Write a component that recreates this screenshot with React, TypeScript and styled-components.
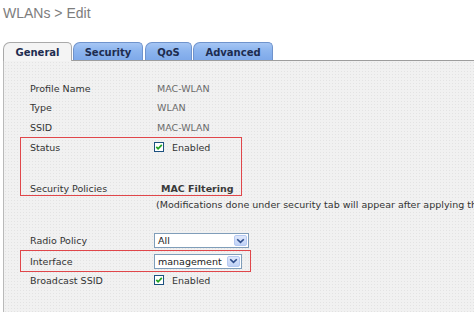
import React from 'react';
import styled, { createGlobalStyle } from 'styled-components';

const GlobalStyle = createGlobalStyle`
  html, body {
    margin: 0;
    padding: 0;
    background: #ffffff;
    overflow: hidden;
  }
  body {
    font-family: "DejaVu Sans", Verdana, sans-serif;
  }
`;

const tabs = [
  { name: 'General', width: 69, gap: 1 },
  { name: 'Security', width: 70, gap: 2 },
  { name: 'QoS', width: 47, gap: 1 },
  { name: 'Advanced', width: 80, gap: 0 },
];

const CheckBox = () => (
  <SCheck width="10" height="10" viewBox="0 0 10 10">
    <rect x="0.5" y="0.5" width="9" height="9" fill="#ffffff" stroke="#1c5180" />
    <path d="M2.3 4.9 L4.1 6.8 L7.8 2.9" fill="none" stroke="#21a121" strokeWidth="1.7" />
  </SCheck>
);

const Select = ({ value, width }: { value: string; width: number }) => (
  <SSelect $width={width}>
    <SSelectText>{value}</SSelectText>
    <SSelectButton>
      <svg width="9" height="6" viewBox="0 0 9 6">
        <path d="M1.2 1.2 L4.5 4.4 L7.8 1.2" fill="none" stroke="#2f4d8c" strokeWidth="1.6" />
      </svg>
    </SSelectButton>
  </SSelect>
);

const App = () => {
  return (
    <SPage>
      <GlobalStyle />
      <STitle>WLANs &gt; Edit</STitle>

      <STabBar>
        {tabs.map((t, i) => (
          <STab key={t.name} $active={i === 0} $width={t.width} $gap={t.gap}>
            {t.name}
          </STab>
        ))}
      </STabBar>

      <SPanel>
        <SRow $h={19.5}>
          <SLabel>Profile Name</SLabel>
          <SValue>MAC-WLAN</SValue>
        </SRow>
        <SRow $h={19.5}>
          <SLabel>Type</SLabel>
          <SValue>WLAN</SValue>
        </SRow>
        <SRow $h={19.5}>
          <SLabel>SSID</SLabel>
          <SValue>MAC-WLAN</SValue>
        </SRow>

        <SHighlight $width={222}>
          <SRow $h={18} $inBox>
            <SLabel>Status</SLabel>
            <SCheckCell>
              <CheckBox />
              <SCheckText>Enabled</SCheckText>
            </SCheckCell>
          </SRow>
          <SSpacer $h={25} />
          <SRow $h={14} $inBox>
            <SLabel>Security Policies</SLabel>
            <SBoldValue>MAC Filtering</SBoldValue>
          </SRow>
        </SHighlight>

        <SNote>(Modifications done under security tab will appear after applying the changes.)</SNote>

        <SRow $h={19} $top={19}>
          <SLabel>Radio Policy</SLabel>
          <Select value="All" width={95} />
        </SRow>

        <SHighlight $width={231}>
          <SRow $h={20} $inBox>
            <SLabel>Interface</SLabel>
            <Select value="management" width={88} />
          </SRow>
        </SHighlight>

        <SRow $h={16}>
          <SLabel>Broadcast SSID</SLabel>
          <SCheckCell>
            <CheckBox />
            <SCheckText>Enabled</SCheckText>
          </SCheckCell>
        </SRow>
      </SPanel>
    </SPage>
  );
};

export default App;

const SPage = styled.div`
  width: 474px;
  height: 312px;
  padding: 5px 0 0 3px;
  box-sizing: border-box;
  display: flex;
  flex-direction: column;
  overflow: hidden;
`;

const STitle = styled.div`
  font-family: "Liberation Sans", Arial, sans-serif;
  font-size: 14px;
  line-height: 16px;
  color: #7d7d7d;
  margin-bottom: 21px;
`;

const STabBar = styled.div`
  display: flex;
  flex-direction: row;
  align-items: flex-end;
  height: 18px;
  position: relative;
  z-index: 1;
`;

const STab = styled.div<{ $active: boolean; $width: number; $gap: number }>`
  width: ${(p) => p.$width}px;
  margin-right: ${(p) => p.$gap}px;
  height: ${(p) => (p.$active ? 19 : 18)}px;
  box-sizing: border-box;
  display: flex;
  align-items: center;
  justify-content: center;
  font-size: 10px;
  font-weight: bold;
  color: #1d2c4f;
  border: 1px solid ${(p) => (p.$active ? '#a9a9a9' : '#6f93cc')};
  border-bottom: none;
  border-radius: 7px 5px 0 0;
  padding-top: 1px;
  margin-bottom: ${(p) => (p.$active ? -1 : 0)}px;
  background: ${(p) =>
    p.$active
      ? '#f4f4f4'
      : 'linear-gradient(to bottom, #a6c6f4 0%, #8db5ee 45%, #7ea9ea 100%)'};
`;

const SPanel = styled.div`
  flex: 1;
  border-top: 1px solid #9d9d9d;
  border-left: 1px solid #b9b9b9;
  background-color: #f1f1f1;
  background-image: radial-gradient(circle, #e3e3e3 0.7px, transparent 0.9px);
  background-size: 3px 3px;
  padding: 17.5px 0 0 16px;
  display: flex;
  flex-direction: column;
  align-items: flex-start;
`;

const SRow = styled.div<{ $h: number; $inBox?: boolean; $top?: number }>`
  display: flex;
  flex-direction: row;
  align-items: center;
  height: ${(p) => p.$h}px;
  margin-top: ${(p) => p.$top || 0}px;
  padding-left: ${(p) => (p.$inBox ? 9 : 10)}px;
  font-size: 9.5px;
  color: #333333;
`;

const SLabel = styled.div`
  width: 124px;
  flex-shrink: 0;
  white-space: nowrap;
`;

const SValue = styled.div`
  padding-left: 3px;
  color: #6a6a6a;
  white-space: nowrap;
`;

const SBoldValue = styled.div`
  padding-left: 7px;
  font-weight: bold;
  color: #3a3a3a;
  white-space: nowrap;
`;

const SHighlight = styled.div<{ $width: number }>`
  width: ${(p) => p.$width}px;
  box-sizing: border-box;
  border: 1px solid #e0464a;
  display: flex;
  flex-direction: column;
`;

const SSpacer = styled.div<{ $h: number }>`
  height: ${(p) => p.$h}px;
`;

const SNote = styled.div`
  margin-top: 2px;
  padding-left: 136px;
  font-size: 9.5px;
  line-height: 14px;
  height: 14px;
  color: #333333;
  white-space: nowrap;
`;

const SCheckCell = styled.div`
  display: flex;
  flex-direction: row;
  align-items: center;
  gap: 8px;
`;

const SCheck = styled.svg`
  display: block;
`;

const SCheckText = styled.span`
  color: #333333;
`;

const SSelect = styled.div<{ $width: number }>`
  width: ${(p) => p.$width}px;
  height: 15px;
  box-sizing: border-box;
  border: 1px solid #7f9db9;
  background: #ffffff;
  display: flex;
  flex-direction: row;
  align-items: center;
  justify-content: space-between;
  padding: 0 1px 0 3px;
`;

const SSelectText = styled.span`
  font-size: 9.5px;
  color: #222222;
`;

const SSelectButton = styled.div`
  width: 13px;
  height: 11px;
  box-sizing: border-box;
  border: 1px solid #b5c9f2;
  border-radius: 2px;
  background: linear-gradient(to bottom, #dfe8fb, #c0d2f6);
  display: flex;
  align-items: center;
  justify-content: center;
`;
